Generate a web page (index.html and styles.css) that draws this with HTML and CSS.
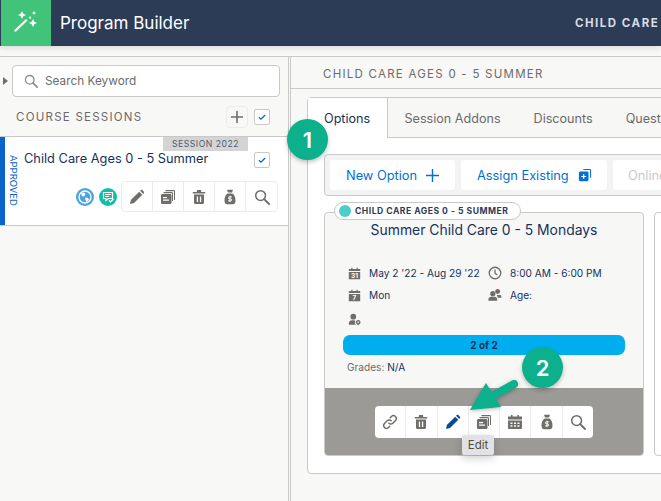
FILE: index.html
```html
<!DOCTYPE html>
<html lang="en">
<head>
  <meta charset="UTF-8" />
  <meta name="viewport" content="width=device-width, initial-scale=1.0"/>
  <title>Program Builder</title>
  <link rel="stylesheet" href="styles.css">
</head>
<body>
  <!-- shared icons -->
  <svg class="sprite" xmlns="http://www.w3.org/2000/svg">
    <symbol id="i-search" viewBox="0 0 16 16"><circle cx="6.600" cy="6.600" r="4.900" fill="none" stroke="currentColor" stroke-width="1.500"/><path d="M10.200 10.200 15 15" stroke="currentColor" stroke-width="1.900" stroke-linecap="round"/></symbol>
    <symbol id="i-pencil" viewBox="0 0 16 16"><path d="M1 15l.9-4L10.200 2.700l3.100 3.100L5 14.100zM11.100 1.800l.8-.7c.4-.4 1-.4 1.400 0l1.600 1.600c.4.4.4 1 0 1.400l-.7.8z" fill="currentColor"/></symbol>
    <symbol id="i-copy" viewBox="0 0 16 16"><path d="M5.500 1h8.200c.7 0 1.300.6 1.300 1.300V11h-1V2.200H5.500zM3.500 3h8.200c.7 0 1.300.6 1.300 1.300V12h-1V4.200H3.500z" fill="currentColor"/><path d="M2.300 5h7.900c.7 0 1.300.6 1.300 1.300v7.400c0 .7-.6 1.300-1.300 1.300H2.300C1.600 15 1 14.400 1 13.700V6.300C1 5.600 1.600 5 2.300 5zM3 8v1.200h4V8zm0 2.500v1.200h6v-1.200z" fill="currentColor" fill-rule="evenodd"/></symbol>
    <symbol id="i-trash" viewBox="0 0 16 16"><path d="M1.800 3h4V1.700C5.800 1.300 6.100 1 6.500 1h3c.4 0 .7.300.7.700V3h4v1.500H1.800zM3 5.500h10v8.300c0 .7-.5 1.200-1.200 1.200H4.200C3.500 15 3 14.500 3 13.800zM5.800 7.500v5.500h1.300V7.500zm3.100 0v5.500h1.300V7.500z" fill="currentColor" fill-rule="evenodd"/></symbol>
    <symbol id="i-bag" viewBox="0 0 16 16"><path d="M5 .8h6L10 3.500H6zM5.600 4.500h4.800C12.500 5.800 13.500 8.500 13.500 11.500c0 2.300-.8 3.700-2.500 3.700H5c-1.700 0-2.500-1.400-2.500-3.700 0-3 1-5.700 3.100-7z" fill="currentColor"/><path d="M9.900 7.900H7.300c-.6 0-.9.400-.9 1s.3 1 .9 1h1.400c.6 0 .9.400.9 1s-.3 1-.9 1H6.100M8 6.800v6.100" fill="none" stroke="#fff" stroke-width="1"/></symbol>
    <symbol id="i-link" viewBox="0 0 16 16"><path d="M6.800 9.200a2.800 2.800 0 0 0 4 0l2.700-2.700a2.830 2.830 0 0 0-4-4L8.300 3.700M9.200 6.800a2.800 2.800 0 0 0-4 0L2.500 9.500a2.830 2.830 0 0 0 4 4l1.200-1.200" fill="none" stroke="currentColor" stroke-width="1.500" stroke-linecap="round"/></symbol>
    <symbol id="i-month" viewBox="0 0 16 16"><path d="M1 2.500h3V1h1.500v1.500h5V1H12v1.500h3v3H1zM1 6.500h14v7.200c0 .7-.6 1.300-1.300 1.300H2.300C1.600 15 1 14.400 1 13.700zM3.500 8.500V10h2V8.500zm3.500 0V10h2V8.500zm3.500 0V10h2V8.500zM3.500 11.200v1.500h2v-1.500zm3.500 0v1.500h2v-1.500zm3.500 0v1.500h2v-1.500z" fill="currentColor" fill-rule="evenodd"/></symbol>
    <symbol id="i-clock" viewBox="0 0 16 16"><circle cx="8" cy="8" r="6.600" fill="none" stroke="currentColor" stroke-width="1.500"/><path d="M8 4v4.300l2.600 2" fill="none" stroke="currentColor" stroke-width="1.500"/></symbol>
    <symbol id="i-people" viewBox="0 0 16 16"><circle cx="11" cy="4" r="2.800" fill="currentColor"/><path d="M10 8h3.500c1 0 1.800.8 1.800 1.800V11H11c-.2-1.200-.5-2.100-1-3z" fill="currentColor"/><circle cx="5.500" cy="6.500" r="3" fill="currentColor"/><path d="M.5 14.500v-1.700C.5 11 2 10 3.500 10h4c1.500 0 3 1 3 2.800v1.700z" fill="currentColor"/></symbol>
    <symbol id="i-person-pin" viewBox="0 0 16 16"><circle cx="6.500" cy="4.500" r="3.500" fill="currentColor"/><path d="M1 14.500v-1.700C1 10.500 3 9 5 9h3c.5 0 .8 1 .5 2-.3 1 .3 2.500 1.200 3.500z" fill="currentColor"/><path d="M12.500 8.500c-1.800 0-3 1.300-3 2.800 0 1.700 3 3.900 3 3.900s3-2.200 3-3.900c0-1.500-1.200-2.800-3-2.800zm0 1.800a1 1 0 1 1 0 2 1 1 0 0 1 0-2z" fill="currentColor" fill-rule="evenodd"/></symbol>
    <symbol id="i-stack-add" viewBox="0 0 16 16"><path d="M6 1h7.500c.8 0 1.500.7 1.500 1.500V11h-1.200V2.200H6z" fill="currentColor"/><path d="M2.500 4h8c.8 0 1.500.7 1.500 1.500v8c0 .8-.7 1.500-1.500 1.500h-8C1.700 15 1 14.300 1 13.500v-8C1 4.700 1.700 4 2.500 4zM5.700 7v2H3.700v1.400h2v2h1.500v-2h2V9h-2V7z" fill="currentColor" fill-rule="evenodd"/></symbol>
    <symbol id="i-check" viewBox="0 0 16 16"><path d="M3 8.500 6.300 11.500 13 4.800" fill="none" stroke="currentColor" stroke-width="2"/></symbol>
  </svg>

  <div class="app">
    <header class="topbar">
      <div class="logo">
        <svg width="24" height="24" viewBox="0 0 24 24" fill="#fff"><path d="M0 19.500 12 8l1.500 1.500L1.500 21z"/><path d="M8 0 9.300 2.700 12 4 9.300 5.300 8 8 6.700 5.300 4 4 6.700 2.700zM19 8 20.300 10.700 23 12 20.300 13.300 19 16 17.700 13.300 15 12 17.700 10.700zM20 0l.7 1.300L22 2l-1.300.7L20 4l-.7-1.300L18 2l1.300-.7zM16 5l.6 1 1 .6-1 .6-.6 1-.6-1-1-.6 1-.6z"/></svg>
      </div>
      <div class="app-name">Program Builder</div>
      <div class="top-label">CHILD CARE</div>
    </header>

    <div class="main">
      <aside class="left">
        <div class="left-top">
          <div class="search-row">
            <span class="caret"></span>
            <div class="search">
              <svg class="ic14"><use href="#i-search"/></svg>
              <span>Search Keyword</span>
            </div>
          </div>
          <div class="title-row">
            <span class="caps">COURSE SESSIONS</span>
            <span class="add-btn"><svg width="14" height="14" viewBox="0 0 14 14"><path d="M7 1v12M1 7h12" stroke="currentColor" stroke-width="1.600"/></svg></span>
            <span class="check"><svg><use href="#i-check"/></svg></span>
          </div>
        </div>

        <div class="session">
          <div class="session-bar"></div>
          <div class="approved">APPROVED</div>
          <div class="session-body">
            <div class="session-head">
              <span class="session-name">Child Care Ages 0 - 5 Summer</span>
              <span class="check"><svg><use href="#i-check"/></svg></span>
            </div>
            <div class="session-foot">
              <span class="dot dot-globe">
                <svg width="18" height="18" viewBox="0 0 18 18"><circle cx="9" cy="9" r="6" fill="none" stroke="#fff" stroke-width="1.300"/><path d="M5 5.500 8 4.500l1.500 1.500-1 2L6 8.500zM9 9.500l3 .5 1 1.500-2.500 3L9.500 12z" fill="#fff"/></svg>
              </span>
              <span class="dot dot-chat">
                <svg width="18" height="18" viewBox="0 0 18 18"><path d="M4.500 4.500h9v6h-4l-2.500 2v-2H4.500z" fill="none" stroke="#fff" stroke-width="1.200"/><path d="M6 6.500h6M6 8.500h4" stroke="#fff"/><path d="M10 12.500l1.500 1.300L14.500 11" fill="none" stroke="#fff" stroke-width="1.300"/></svg>
              </span>
              <div class="tools">
                <span class="tool"><svg><use href="#i-pencil"/></svg></span>
                <span class="tool"><svg><use href="#i-copy"/></svg></span>
                <span class="tool"><svg><use href="#i-trash"/></svg></span>
                <span class="tool"><svg><use href="#i-bag"/></svg></span>
                <span class="tool"><svg><use href="#i-search"/></svg></span>
              </div>
            </div>
          </div>
          <div class="session-tag">SESSION 2022</div>
        </div>
      </aside>

      <section class="right">
        <div class="right-title"><span class="caps">CHILD CARE AGES 0 - 5 SUMMER</span></div>

        <div class="tabbox">
          <div class="tabs">
            <span class="tab active">Options</span>
            <span class="tab">Session Addons</span>
            <span class="tab">Discounts</span>
            <span class="tab">Questions</span>
          </div>
          <div class="tab-body">
            <div class="actions">
              <span class="action new">New Option <svg width="13" height="13" viewBox="0 0 13 13"><path d="M6.500 0v13M0 6.500h13" stroke="currentColor" stroke-width="1.400"/></svg></span>
              <span class="action assign">Assign Existing <svg class="ic14"><use href="#i-stack-add"/></svg></span>
              <span class="action off">Online Registration</span>
            </div>

            <div class="cards">
              <article class="card">
                <div class="pill"><i></i>CHILD CARE AGES 0 - 5 SUMMER</div>
                <h3 class="card-title">Summer Child Care 0 - 5 Mondays</h3>
                <div class="info">
                  <div class="info-item">
                    <svg class="ic13" viewBox="0 0 16 16"><path d="M1 2.500h3V1h1.500v1.500h5V1H12v1.500h3V5H1zM1 6h14v9H1z" fill="currentColor"/><text x="8" y="13.500" class="cal-num">31</text></svg>
                    May 2 '22 - Aug 29 '22
                  </div>
                  <div class="info-item"><svg class="ic14"><use href="#i-clock"/></svg>8:00 AM - 6:00 PM</div>
                  <div class="info-item">
                    <svg class="ic13" viewBox="0 0 16 16"><path d="M1 2.500h3V1h1.500v1.500h5V1H12v1.500h3V5H1zM1 6h14v9H1z" fill="currentColor"/><text x="8" y="13.500" class="cal-num">7</text></svg>
                    Mon
                  </div>
                  <div class="info-item"><svg class="ic14"><use href="#i-people"/></svg>Age:</div>
                  <div class="info-item"><svg class="ic13"><use href="#i-person-pin"/></svg></div>
                </div>
                <div class="progress">2 of 2</div>
                <div class="grades">Grades: <b>N/A</b></div>
                <div class="card-foot">
                  <div class="tools white">
                    <span class="tool"><svg><use href="#i-link"/></svg></span>
                    <span class="tool"><svg><use href="#i-trash"/></svg></span>
                    <span class="tool on"><svg><use href="#i-pencil"/></svg></span>
                    <span class="tool"><svg><use href="#i-copy"/></svg></span>
                    <span class="tool"><svg><use href="#i-month"/></svg></span>
                    <span class="tool"><svg><use href="#i-bag"/></svg></span>
                    <span class="tool"><svg><use href="#i-search"/></svg></span>
                  </div>
                  <div class="tooltip">Edit</div>
                </div>
              </article>
              <article class="card next"></article>
            </div>
          </div>
        </div>
      </section>
    </div>

    <!-- callouts drawn on top of the screenshot -->
    <div class="badge badge-1">1</div>
    <div class="badge badge-2">2</div>
    <svg class="arrow" width="60" height="40" viewBox="0 0 60 40"><path d="M44 6 19 20" stroke="#0db08d" stroke-width="8" stroke-linecap="round"/><path d="M0 32 16 5 22 15 31 29z" fill="#0db08d"/></svg>
  </div>
</body>
</html>
```

FILE: styles.css
```css
* {
  box-sizing: border-box;
}
body {
  margin: 0;
  background: #f8f8f7;
  color: #16325c;
  font-family: Inter, "Liberation Sans", sans-serif;
}
.sprite {
  display: none;
}
.ic13 {
  width: 13px;
  height: 13px;
}
.ic14 {
  width: 14px;
  height: 14px;
}
.app {
  position: relative;
  width: 661px;
  height: 501px;
  overflow: hidden;
}

/* top bar */
.topbar {
  display: flex;
  align-items: center;
  height: 46px;
  padding-left: 1px;
  background: #2c3b56;
  box-shadow: 0 2px 6px rgba(0, 0, 0, 0.12);
}
.logo {
  display: flex;
  align-items: center;
  justify-content: center;
  width: 50px;
  height: 46px;
  background: #41c47a;
}
.app-name {
  margin-left: 9px;
  color: #fff;
  font-size: 17px;
}
.top-label {
  margin-left: auto;
  width: 86px;
  color: #d8dce4;
  font-size: 11.5px;
  font-weight: 700;
  letter-spacing: 1.5px;
  white-space: nowrap;
}

.main {
  display: flex;
  height: 445px;
  margin-top: 10px;
  border-top: 1px solid #c9c9c9;
}
.caps {
  color: #6b6b6b;
  font-size: 11.5px;
  letter-spacing: 1.25px;
  white-space: nowrap;
}

/* left column */
.left {
  flex: none;
  width: 289px;
  border-right: 1px solid #c9c9c9;
}
.left-top {
  height: 80px;
  padding-top: 8px;
  border-bottom: 1px solid #c9c9c9;
}
.search-row {
  display: flex;
  align-items: center;
  padding-left: 3px;
}
.caret {
  width: 0;
  height: 0;
  border-left: 5px solid #706e6b;
  border-top: 4px solid transparent;
  border-bottom: 4px solid transparent;
}
.search {
  display: flex;
  align-items: center;
  gap: 7px;
  width: 268px;
  height: 32px;
  margin-left: 4px;
  padding-left: 11px;
  border: 1px solid #c9c9c9;
  border-radius: 4px;
  background: #fff;
  color: #6b6b6b;
  font-size: 11.8px;
}
.search svg {
  color: #8c8c8c;
}
.title-row {
  display: flex;
  align-items: center;
  height: 22px;
  margin-top: 9px;
  padding: 0 18px 0 16px;
}
.title-row .caps {
  flex: 1;
}
.add-btn {
  display: flex;
  align-items: center;
  justify-content: center;
  width: 22px;
  height: 22px;
  margin-right: 6px;
  border: 1px solid #ececec;
  border-radius: 4px;
  color: #706e6b;
}
.check {
  display: inline-flex;
  width: 16px;
  height: 16px;
  padding: 2px;
  border: 1px solid #c9c9c9;
  border-radius: 2px;
  background: #fff;
  color: #0a63c9;
}
.check svg {
  width: 100%;
  height: 100%;
}

.session {
  position: relative;
  display: flex;
  height: 89px;
  border-bottom: 1px solid #c9c9c9;
  background: #fff;
}
.session-bar {
  flex: none;
  width: 5px;
  background: #0a63c9;
}
.approved {
  flex: none;
  width: 14px;
  padding: 18px 0 0 2px;
  color: #0a63c9;
  font-size: 9.5px;
  writing-mode: vertical-rl;
}
.session-body {
  flex: 1;
  padding: 15px 10px 0 5px;
}
.session-head {
  display: flex;
  justify-content: space-between;
  padding-right: 8px;
}
.session-name {
  font-size: 12.8px;
  line-height: 14px;
}
.session-foot {
  display: flex;
  align-items: center;
  justify-content: flex-end;
  margin-top: 13px;
}
.session-foot .tools {
  height: 31px;
}
.dot {
  display: flex;
  width: 18px;
  height: 18px;
  margin-right: 5px;
  border-radius: 50%;
}
.dot-globe {
  background: #4aa3df;
}
.dot-chat {
  margin-right: 4px;
  background: #0fbfa8;
}
.tools {
  display: flex;
  height: 32px;
  border: 1px solid #ececec;
  border-radius: 4px;
  background: #fff;
}
.tool {
  display: flex;
  align-items: center;
  justify-content: center;
  width: 31px;
  border-right: 1px solid #ececec;
  color: #706e6b;
}
.tool:last-child {
  border-right: 0;
}
.tool svg {
  width: 16px;
  height: 16px;
}
.tool.on {
  color: #0b4a94;
}
.session-tag {
  position: absolute;
  top: 0;
  left: 163px;
  width: 85px;
  height: 14px;
  background: #d4d4d4;
  color: #4d5a70;
  font-size: 8.6px;
  line-height: 14px;
  letter-spacing: 0.55px;
  text-align: center;
}

/* right column */
.right {
  flex: 1;
  min-width: 0;
  margin-left: 1px;
  border-left: 1px solid #c9c9c9;
}
.right-title {
  height: 32px;
  padding-left: 32px;
  border-bottom: 1px solid #c9c9c9;
  line-height: 31px;
}
.tabbox {
  width: 381px;
  height: 377px;
  margin: 8px 0 0 16px;
  border: 1px solid #c9c9c9;
  border-radius: 4px 0 0 4px;
  background: #fff;
}
.tabs {
  display: flex;
  height: 40px;
  border-bottom: 1px solid #c9c9c9;
  background: #f7f7f6;
  font-size: 12.6px;
}
.tab {
  flex: none;
  padding: 0 16.5px;
  color: #6b6b6b;
  line-height: 41px;
  white-space: nowrap;
}
.tab.active {
  width: 80px;
  height: 40px;
  padding: 0 0 0 16px;
  border-right: 1px solid #c9c9c9;
  background: #fff;
  color: #16325c;
}
.tab-body {
  padding: 16px 0 0 16px;
}
.actions {
  display: flex;
  gap: 6px;
  width: 400px;
  height: 42px;
  padding: 5px;
  border: 1px solid #c9c9c9;
  border-radius: 4px;
  background: #f3f3f3;
}
.action {
  display: flex;
  align-items: center;
  flex: none;
  gap: 9px;
  height: 30px;
  border-radius: 3px;
  background: #fff;
  color: #0070d2;
  font-size: 12.8px;
  white-space: nowrap;
}
.new {
  width: 125px;
  padding-left: 16px;
}
.assign {
  width: 146px;
  padding-left: 16px;
}
.off {
  padding: 0 15px;
  color: #c9c9c9;
}
.cards {
  display: flex;
  gap: 10px;
  margin-top: 16px;
}
.card {
  position: relative;
  display: flex;
  flex-direction: column;
  flex: none;
  width: 320px;
  height: 244px;
  padding-top: 8px;
  border: 1px solid #c9c9c9;
  border-radius: 4px;
  background: #f7f7f6;
}
.card.next {
  background: #fff;
}
.pill {
  position: absolute;
  top: -11px;
  left: 9px;
  display: flex;
  align-items: center;
  gap: 4px;
  width: 187px;
  height: 18px;
  padding-left: 4px;
  border: 1px solid #c9c9c9;
  border-radius: 9px;
  background: #fff;
  color: #2d3a55;
  font-size: 8.6px;
  font-weight: 700;
  letter-spacing: 0.5px;
  white-space: nowrap;
}
.pill i {
  flex: none;
  width: 12px;
  height: 12px;
  border-radius: 50%;
  background: #4dcfc9;
}
.card-title {
  margin: 0;
  font-size: 13.9px;
  font-weight: 400;
  line-height: 18px;
  text-align: center;
}
.info {
  display: grid;
  grid-template-columns: 140px 1fr;
  grid-template-rows: 22px 22px 26px;
  height: 70px;
  margin: 23px 0 0 23px;
  font-size: 10.15px;
}
.info-item {
  display: flex;
  align-items: center;
  gap: 8px;
  white-space: nowrap;
}
.info-item svg {
  flex: none;
  color: #706e6b;
}
.cal-num {
  fill: #fff;
  font-size: 8px;
  font-weight: 700;
  text-anchor: middle;
}
.progress {
  flex: none;
  height: 20px;
  margin: 3px 18px 0;
  border-radius: 7px;
  background: #00aeef;
  font-size: 10px;
  font-weight: 700;
  line-height: 20px;
  text-align: center;
}
.grades {
  margin: 6px 0 0 22px;
  color: #6b6b6b;
  font-size: 10.1px;
  line-height: 12px;
}
.grades b {
  color: #16325c;
  font-weight: 400;
}
.card-foot {
  position: relative;
  flex: 1;
  margin-top: 15px;
  padding: 18px 0 0 50px;
  border-radius: 0 0 3px 3px;
  background: #9b9a97;
}
.tools.white {
  width: 218px;
  border: 0;
}
.tools.white .tool {
  flex: 1;
}
.tooltip {
  position: absolute;
  top: 47px;
  left: 137px;
  width: 32px;
  height: 20px;
  border-radius: 2px;
  background: #e2e1e6;
  box-shadow: 0 3px 8px rgba(0, 0, 0, 0.2);
  color: #4d4d4d;
  font-size: 11.5px;
  line-height: 20px;
  text-align: center;
}

/* numbered callouts */
.badge {
  position: absolute;
  display: flex;
  align-items: center;
  justify-content: center;
  width: 41px;
  height: 41px;
  border-radius: 50%;
  background: #0db08d;
  box-shadow: 0 2px 4px rgba(0, 0, 0, 0.25);
  color: #fff;
  font-size: 22px;
  font-weight: 600;
}
.badge-1 {
  top: 119px;
  left: 287px;
}
.badge-2 {
  top: 347px;
  left: 522px;
}
.arrow {
  position: absolute;
  top: 378px;
  left: 470px;
  filter: drop-shadow(0 1px 2px rgba(0, 0, 0, 0.3));
}
```
